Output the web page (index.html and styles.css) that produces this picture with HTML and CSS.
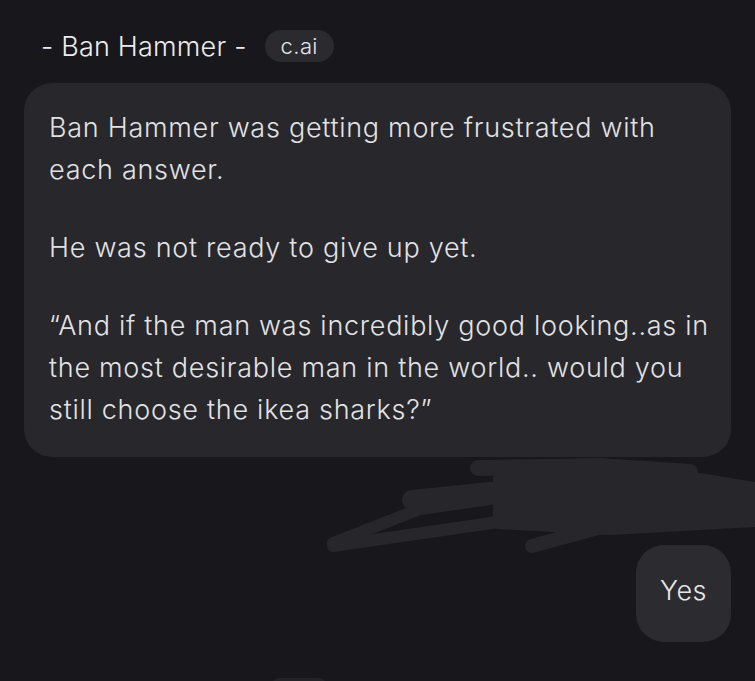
FILE: index.html
```html
<!DOCTYPE html>
<html lang="en">
<head>
<meta charset="utf-8">
<title>Chat</title>
<link rel="stylesheet" href="styles.css">
</head>
<body>
<div class="page">
  <div class="header">
    <span class="name">- Ban Hammer -</span>
    <span class="pill">c.ai</span>
  </div>
  <div class="bubble">
    <p>Ban Hammer was getting more frustrated with each answer.</p>
    <p>He was not ready to give up yet.</p>
    <p>“And if the man was incredibly good looking..as in the most desirable man in the world.. would you still choose the ikea sharks?”</p>
  </div>
  <div class="reply-row">
    <div class="reply">Yes</div>
  </div>
  <div class="next-row"><div class="next"></div></div>
</div>
<svg class="scribble" width="755" height="681" viewBox="0 0 755 681" aria-hidden="true">
  <g fill="#26262b" stroke="#26262b" stroke-linecap="round" stroke-linejoin="round">
    <path d="M478 468 L600 466 L690 472" stroke-width="16" fill="none"/>
    <path d="M498 478 L700 478 L755 487 L755 522 L610 530 L498 524 Z" stroke-width="10"/>
    <path d="M412 500 L500 491" stroke-width="20" fill="none"/>
    <path d="M333 543 L420 509 L505 497" stroke-width="12" fill="none"/>
    <path d="M333 546 L505 521" stroke-width="12" fill="none"/>
    <path d="M532 546 L620 522 L660 520" stroke-width="14" fill="none"/>
  </g>
</svg>
</body>
</html>
```
FILE: styles.css
```css
html, body {
  margin: 0;
  padding: 0;
  background: #18181c;
  height: 100%;
  overflow: hidden;
}
body {
  font-family: Inter, "Noto Sans", sans-serif;
  color: #e6e6e8;
  position: relative;
}
.page {
  padding: 30px 24px 0 24px;
  display: flex;
  flex-direction: column;
}
.header {
  display: flex;
  align-items: center;
  height: 32px;
  padding-left: 17px;
  gap: 18px;
}
.name {
  font-size: 27px;
  font-weight: 300;
  letter-spacing: 0.2px;
  color: #ececee;
}
.pill {
  background: #2a2a2f;
  border-radius: 16px;
  height: 32px;
  padding: 0 16px;
  display: flex;
  align-items: center;
  font-size: 22px;
  font-weight: 300;
  letter-spacing: 0.4px;
  color: #e6e6e8;
}
.bubble {
  margin-top: 21px;
  background: #27272c;
  border-radius: 28px;
  padding: 24px 18px 26px 25px;
}
.bubble p {
  margin: 0;
  font-size: 27px;
  font-weight: 300;
  letter-spacing: 0.72px;
  line-height: 42px;
  color: #e2e2e4;
}
.bubble p + p {
  margin-top: 36px;
}
.reply-row {
  display: flex;
  justify-content: flex-end;
  margin-top: 88px;
}
.reply {
  width: 95px;
  height: 97px;
  border-radius: 28px;
  background: #2b2b30;
  display: flex;
  align-items: center;
  justify-content: center;
  padding-bottom: 6px;
  box-sizing: border-box;
  font-size: 27px;
  font-weight: 300;
  letter-spacing: 0.5px;
  color: #e6e6e8;
}
.next-row {
  margin-top: 36px;
  padding-left: 246px;
}
.next {
  width: 58px;
  height: 20px;
  border-radius: 10px 10px 0 0;
  background: #222227;
}
.scribble {
  position: absolute;
  left: 0;
  top: 0;
  pointer-events: none;
}
```
